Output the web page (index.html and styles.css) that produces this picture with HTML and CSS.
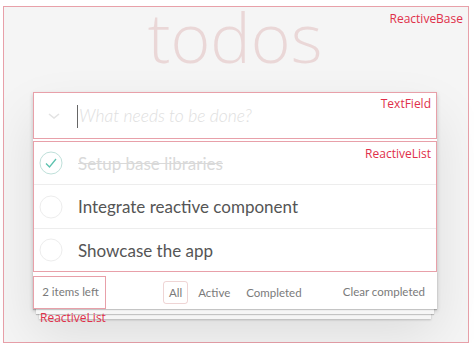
FILE: index.html
```html
<!DOCTYPE html>
<html>
<head>
<meta charset="utf-8">
<link rel="stylesheet" href="styles.css">
</head>
<body>
<div class="base">
  <span class="tag tag-base">ReactiveBase</span>
  <h1 class="title">todos</h1>
  <div class="card">
    <div class="field">
      <svg class="chevron" width="12" height="6" viewBox="0 0 12 6"><path d="M1 1 L6 5 L11 1" fill="none" stroke="#e3e3e3" stroke-width="1.6"/></svg>
      <span class="cursor"></span>
      <span class="placeholder">What needs to be done?</span>
      <span class="tag tag-field">TextField</span>
    </div>
    <div class="list">
      <span class="tag tag-list">ReactiveList</span>
      <div class="row">
        <svg class="toggle" width="24" height="24" viewBox="0 0 24 24"><circle cx="12" cy="12" r="11" fill="none" stroke="#bfe0da" stroke-width="1"/><path d="M7 12.5 L10.5 16 L17 8" fill="none" stroke="#5dc2af" stroke-width="1.3"/></svg>
        <span class="label done">Setup base libraries</span>
      </div>
      <div class="row">
        <svg class="toggle" width="24" height="24" viewBox="0 0 24 24"><circle cx="12" cy="12" r="11" fill="none" stroke="#ededed" stroke-width="1"/></svg>
        <span class="label">Integrate reactive component</span>
      </div>
      <div class="row">
        <svg class="toggle" width="24" height="24" viewBox="0 0 24 24"><circle cx="12" cy="12" r="11" fill="none" stroke="#ededed" stroke-width="1"/></svg>
        <span class="label">Showcase the app</span>
      </div>
    </div>
    <div class="footer">
      <div class="count">2 items left<span class="tag tag-count">ReactiveList</span></div>
      <div class="filters">
        <span class="filter selected">All</span>
        <span class="filter">Active</span>
        <span class="filter">Completed</span>
      </div>
      <span class="clear">Clear completed</span>
    </div>
  </div>
</div>
</body>
</html>
```
FILE: styles.css
```css
body {
  margin: 0;
  background: #ffffff;
  font-family: Lato, "Open Sans", sans-serif;
}
.base {
  position: relative;
  margin: 6px 0 0 3px;
  width: 466px;
  height: 337px;
  box-sizing: border-box;
  border: 1px solid #e8a0a9;
  background: #f5f5f5;
  padding-left: 29px;
}
.tag {
  position: absolute;
  color: #e0304a;
  font-family: "Open Sans", sans-serif;
  font-size: 12px;
  line-height: 14px;
  white-space: nowrap;
}
.tag-base { right: 5px; top: 5px; }
.tag-field { right: 5px; top: 4px; }
.tag-list { right: 5px; top: 5px; }
.tag-count { left: 6px; top: 100%; margin-top: 3px; }
.title {
  margin: -4px 0 21px 0;
  width: 404px;
  height: 68px;
  text-align: center;
  font-family: "Open Sans", sans-serif;
  font-size: 68px;
  line-height: 68px;
  font-weight: 300;
  color: rgba(175, 47, 47, 0.15);
}
.card {
  position: relative;
  width: 404px;
  background: #ffffff;
  box-shadow: 0 2px 4px 0 rgba(0, 0, 0, 0.2), 0 25px 50px 0 rgba(0, 0, 0, 0.1);
}
.field {
  position: relative;
  height: 47px;
  box-sizing: border-box;
  border: 1px solid #e8a0a9;
  display: flex;
  align-items: center;
}
.chevron { margin-left: 14px; margin-top: 1px; }
.cursor {
  width: 1px;
  height: 23px;
  background: #666;
  margin-left: 17px;
  margin-top: 1px;
}
.placeholder {
  margin-left: 1px;
  font-size: 17.5px;
  font-style: italic;
  font-weight: 300;
  color: #e0e0e0;
}
.list {
  position: relative;
  margin-top: 2px;
  border: 1px solid #e8a0a9;
}
.row {
  height: 42px;
  display: flex;
  align-items: center;
  border-bottom: 1px solid #ededed;
}
.row:nth-child(3) { height: 43px; }
.row:last-child { border-bottom: none; }
.toggle { margin-left: 5px; flex: none; }
.label {
  margin-left: 15px;
  font-size: 17px;
  color: #555;
  font-weight: 400;
}
.label.done {
  color: #d9d9d9;
  text-decoration: line-through;
}
.footer {
  position: relative;
  height: 37px;
  display: flex;
  align-items: flex-end;
  font-size: 11.5px;
  color: #7a7a7a;
}
.footer::before {
  content: '';
  position: absolute;
  right: 0;
  bottom: 0;
  left: 0;
  height: 37px;
  overflow: hidden;
  box-shadow: 0 1px 1px rgba(0, 0, 0, 0.2), 0 8px 0 -3px #f6f6f6, 0 9px 1px -3px rgba(0, 0, 0, 0.2), 0 16px 0 -6px #f6f6f6, 0 17px 2px -6px rgba(0, 0, 0, 0.2);
}
.count {
  position: relative;
  width: 73px;
  height: 33px;
  box-sizing: border-box;
  border: 1px solid #e8a0a9;
  display: flex;
  align-items: center;
  justify-content: center;
  padding: 0 0 2px 2px;
  background: #fff;
  white-space: nowrap;
}
.filters {
  position: relative;
  display: flex;
  margin-left: 55px;
  align-self: center;
  margin-top: 4px;
}
.filter {
  margin: 0 2px;
  padding: 0 5px;
  height: 23px;
  line-height: 21px;
  box-sizing: border-box;
  border: 1px solid transparent;
  border-radius: 3px;
  white-space: nowrap;
}
.filter.selected { border-color: rgba(175, 47, 47, 0.2); }
.clear {
  position: relative;
  margin-left: auto;
  margin-right: 12px;
  align-self: center;
  margin-top: 2px;
  white-space: nowrap;
}
```
